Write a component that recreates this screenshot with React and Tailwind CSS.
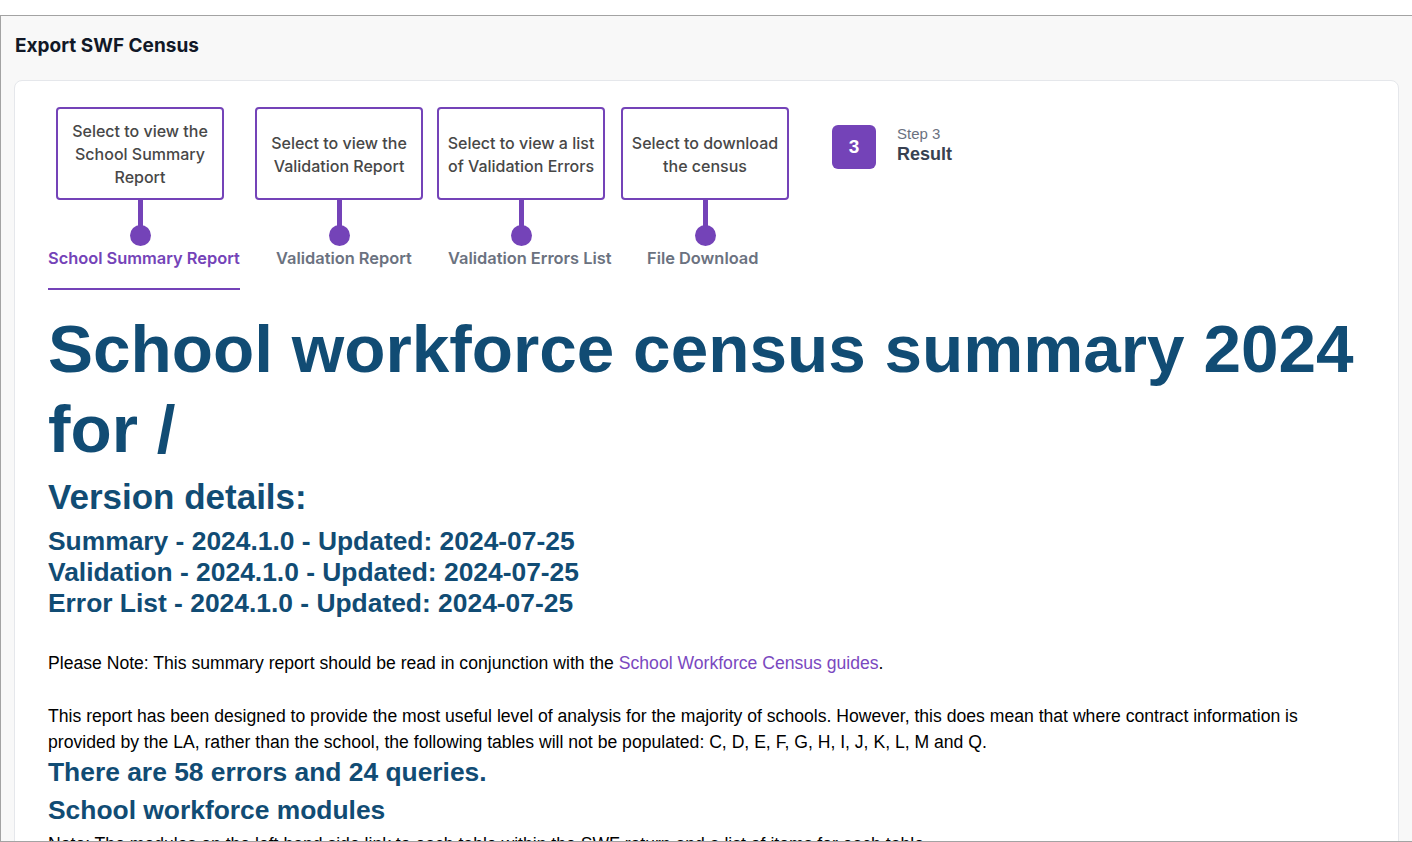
import React from "react";

const steps = [
  { box: "Select to view the School Summary Report", label: "School Summary Report", colW: "w-[207px]", boxMl: "ml-[8px]", labelMl: "ml-0", active: true },
  { box: "Select to view the Validation Report", label: "Validation Report", colW: "w-[182px]", boxMl: "ml-0", labelMl: "ml-[21px]" },
  { box: "Select to view a list of Validation Errors", label: "Validation Errors List", colW: "w-[184px]", boxMl: "ml-0", labelMl: "ml-[11px]" },
  { box: "Select to download the census", label: "File Download", colW: "w-[168px]", boxMl: "ml-0", labelMl: "ml-[26px]" },
];

const versions = [
  "Summary - 2024.1.0 - Updated: 2024-07-25",
  "Validation - 2024.1.0 - Updated: 2024-07-25",
  "Error List - 2024.1.0 - Updated: 2024-07-25",
];

const Step = ({ step }) => (
  <div className={`flex flex-col items-start shrink-0 ${step.colW}`}>
    {/* box + connector */}
    <div className={`flex flex-col items-center ${step.boxMl}`}>
      <div className="w-[168px] h-[93px] px-[6px] pt-[2px] flex items-center justify-center text-center border-2 border-[#7443b8] rounded-[4px] bg-white text-[16px] leading-[23px] text-[#474747] font-medium">
        {step.box}
      </div>
      <div className="w-[5px] h-[27px] bg-[#7443b8]" />
      <div className="w-[21px] h-[21px] -mt-[2px] rounded-full bg-[#7443b8]" />
    </div>
    <div
      className={`${step.labelMl} text-[16.4px] leading-6 font-semibold whitespace-nowrap ${
        step.active
          ? "text-[#7443b8] border-b-2 border-[#7443b8] pb-[18px]"
          : "text-[#6b7280]"
      }`}
    >
      {step.label}
    </div>
  </div>
);

export default function App() {
  return (
    <div className="bg-white pt-[15px] h-[842px] overflow-hidden" style={{ fontFamily: "Inter, 'Liberation Sans', sans-serif" }}>
      <div className="h-[827px] overflow-hidden bg-[#f8f8f8] border-t border-l border-b border-[#a3a3a3]">
        <h1 className="pl-[14px] pt-[16px] text-[19px] leading-7 font-bold text-[#111827]">
          Export SWF Census
        </h1>

        <div className="mt-[20px] mx-[13px] bg-white border border-[#e5e7eb] rounded-lg pt-[26px] pl-[33px] pr-[40px] h-[900px]">
          {/* stepper */}
          <div className="flex items-start">
            {steps.map((s) => (
              <Step key={s.label} step={s} />
            ))}
            <div className="ml-[43px] mt-[18px] flex items-start">
              <div className="w-[44px] h-[44px] rounded-md bg-[#7443b8] flex items-center justify-center text-white font-bold text-[19px] font-['Liberation_Sans',Arial,sans-serif]">
                3
              </div>
              <div className="ml-[21px] font-['Liberation_Sans',Arial,sans-serif]">
                <div className="text-[15px] leading-[18px] text-[#6b7280]">Step 3</div>
                <div className="text-[18px] leading-[22px] font-bold text-[#374151]">Result</div>
              </div>
            </div>
          </div>

          {/* report */}
          <div className="font-['Liberation_Sans',Arial,sans-serif] text-black">
            <h2 className="mt-[19px] text-[67.5px] leading-[80px] font-bold text-[#114c74]">
              School workforce census summary 2024 for /
            </h2>
            <h3 className="mt-[8px] text-[35px] leading-[39px] font-bold text-[#114c74]">
              Version details:
            </h3>
            <div className="mt-[10px] text-[26.4px] leading-[31px] font-bold text-[#114c74]">
              {versions.map((v) => (
                <div key={v}>{v}</div>
              ))}
            </div>
            <p className="mt-[31px] text-[17.6px] leading-[26px]">
              Please Note: This summary report should be read in conjunction with the{" "}
              <a className="text-[#7a48c0]" href="#">School Workforce Census guides</a>.
            </p>
            <p className="mt-[27px] text-[17.6px] leading-[26px]">
              This report has been designed to provide the most useful level of analysis for the majority of schools. However, this does mean that where contract information is provided by the LA, rather than the school, the following tables will not be populated: C, D, E, F, G, H, I, J, K, L, M and Q.
            </p>
            <h3 className="mt-[2px] text-[26.4px] leading-[30px] font-bold text-[#114c74]">
              There are 58 errors and 24 queries.
            </h3>
            <h3 className="mt-[8px] text-[26.4px] leading-[30px] font-bold text-[#114c74]">
              School workforce modules
            </h3>
            <p className="mt-[6px] text-[17.6px] leading-[26px]">
              Note: The modules on the left hand side link to each table within the SWF return and a list of items for each table.
            </p>
          </div>
        </div>
      </div>
    </div>
  );
}
